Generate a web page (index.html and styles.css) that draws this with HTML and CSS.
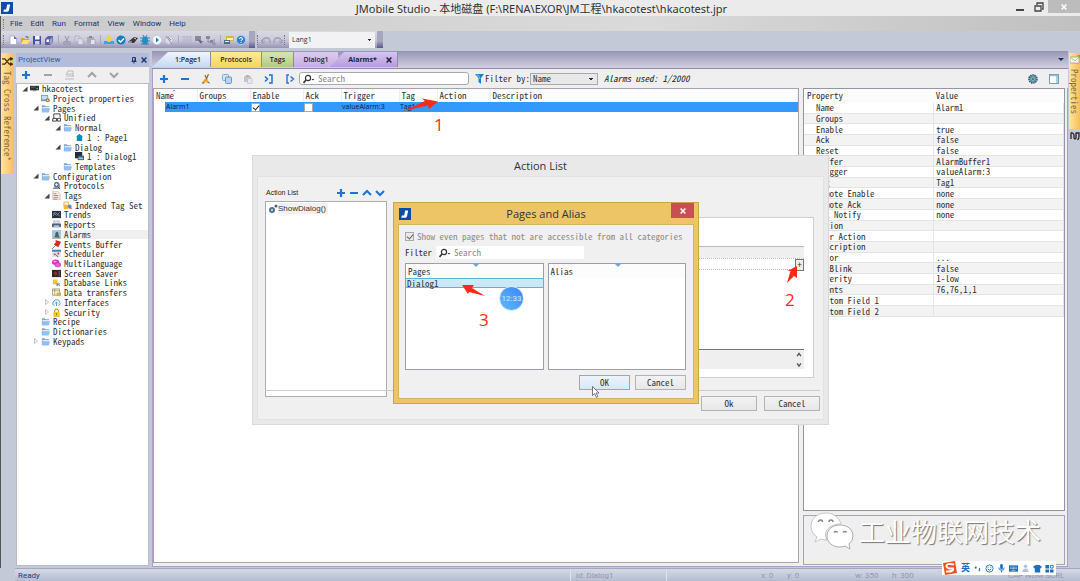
FILE: index.html
```html
<!DOCTYPE html>
<html lang="en">
<head>
<meta charset="utf-8">
<title>JMobile Studio</title>
<link rel="stylesheet" href="styles.css">
</head>
<body>
<svg class="defs" aria-hidden="true">
  <defs>
    <symbol id="logo" viewBox="0 0 12 12"><rect width="12" height="12" fill="#0b4da2"/><path d="M6.2 2.5h3L8 8.2Q7.600 9.800 6 9.800H2.300L2.900 7.600H5.100Z" fill="#fff"/></symbol>
    <symbol id="plus" viewBox="0 0 10 10"><path d="M5 1v8M1 5h8" stroke="#1b74d8" stroke-width="2.200" fill="none"/></symbol>
    <symbol id="minus" viewBox="0 0 10 10"><path d="M1 5h8" stroke="currentColor" stroke-width="2" fill="none"/></symbol>
    <symbol id="up" viewBox="0 0 10 10"><path d="M1 7l4-4 4 4" stroke="currentColor" stroke-width="2" fill="none"/></symbol>
    <symbol id="down" viewBox="0 0 10 10"><path d="M1 3l4 4 4-4" stroke="currentColor" stroke-width="2" fill="none"/></symbol>
    <symbol id="rename" viewBox="0 0 10 10"><path d="M3 1h5v6M2 4h6M1 6h8M0 9h9M3 1L1 5" stroke="#bbb" fill="none"/></symbol>
    <symbol id="new" viewBox="0 0 10 10"><path d="M2 1h4l2.500 2.500V9.500H2z" fill="#fff" stroke="#99a3c4" stroke-width=".7"/><path d="M6 1v3h3" fill="#5c6fa8"/></symbol>
    <symbol id="open" viewBox="0 0 10 10"><path d="M1 3h3l1 1h4v5H1z" fill="#d9a51e"/><path d="M3 5h7L8 9H1z" fill="#ffe076"/><path d="M5 2q2-2 3 0l1-.5-1 2-1.500-1" fill="#557a9c"/></symbol>
    <symbol id="save" viewBox="0 0 10 10"><path d="M1 1h8v8.500H1z" fill="#4750a0"/><path d="M3 1h4.500v3.500H3z" fill="#fff"/><path d="M3 6h4.500v3.500H3z" fill="#c9cdf0"/></symbol>
    <symbol id="saveall" viewBox="0 0 10 10"><path d="M1 4l3-3h5v6l-3 3H1z" fill="#5a61a8"/><path d="M2.500 4.500h2.500v2.500H2.500z" fill="#fff"/><path d="M6.300 4v5M7.800 2.500v5.500" stroke="#c6cae9" stroke-width=".8"/></symbol>
    <symbol id="cut" viewBox="0 0 10 10"><path d="M3 1l3 6M7 1L4 7" stroke="#9898a8" stroke-width="1"/><circle cx="3" cy="8" r="1.400" fill="none" stroke="#9898a8"/><circle cx="7" cy="8" r="1.400" fill="none" stroke="#9898a8"/></symbol>
    <symbol id="copyg" viewBox="0 0 10 10"><path d="M1 1h4l1 1v5H1z" fill="#d3d2e2" stroke="#a9a8ba" stroke-width=".7"/><path d="M4 3.500h3L9 5v4.500H4z" fill="#dddce9" stroke="#a9a8ba" stroke-width=".7"/></symbol>
    <symbol id="pasteg" viewBox="0 0 10 10"><path d="M1 2h7v6H1z" fill="#aaa9b9"/><path d="M3 1h3v2H3z" fill="#88889a"/><path d="M4.500 4.500H9v5H4.500z" fill="#e4e3ee" stroke="#9a99ac" stroke-width=".6"/></symbol>
    <symbol id="dl" viewBox="0 0 10 10"><path d="M0 6h10v3H0z" fill="#35a7d8"/><path d="M3.500 7V3.500h-2L5 0l3.500 3.500h-2V7z" fill="#f5d42f"/></symbol>
    <symbol id="check" viewBox="0 0 10 10"><circle cx="5" cy="5" r="4.600" fill="#1380bd"/><path d="M2.500 5l2 2 3.500-3.500" stroke="#fff" stroke-width="1.300" fill="none"/></symbol>
    <symbol id="plug" viewBox="0 0 10 10"><path d="M0 7l6-5 4 1-4 5H2z" fill="#38353a"/><path d="M1 7h3M6 3l2 1" stroke="#ddd"/></symbol>
    <symbol id="bug" viewBox="0 0 10 10"><path d="M0 3h10M0 6h10M1 9h8M3 0l1 2M7 0L6 2" stroke="#248bb2"/><ellipse cx="5" cy="5.500" rx="3" ry="4" fill="#218ebd"/></symbol>
    <symbol id="play" viewBox="0 0 10 10"><circle cx="5" cy="5" r="4.500" fill="#fff" stroke="#bfc1d0" stroke-width=".7"/><path d="M4 2.500L7 5 4 7.500z" fill="#1a7fc1"/></symbol>
    <symbol id="nop" viewBox="0 0 10 10"><circle cx="5" cy="5" r="4" fill="#dcdbe6" stroke="#c2c1cf"/><path d="M2 1l6 8M4 2l3 3" stroke="#908fa0"/></symbol>
    <symbol id="gridi" viewBox="0 0 10 10"><path d="M0 2h10M0 5h10M0 8h10M2 1v8M5 1v8M8 1v8" stroke="#b2b0c4" stroke-width=".8"/></symbol>
    <symbol id="snap" viewBox="0 0 10 10"><path d="M1 1h6v5H1z" fill="#8b899d"/><path d="M3 4l4 5 1-2h2z" fill="#6a687e"/></symbol>
    <symbol id="align" viewBox="0 0 10 10"><path d="M0 1h4v3H0zM4 5h3v3H4z" fill="#8a889b"/><path d="M2 4v3h2M8 4v5M6 9h4" stroke="#8a889b" fill="none"/></symbol>
    <symbol id="wnd" viewBox="0 0 10 10"><path d="M2 1h8v5H2z" fill="#d8b63e"/><path d="M3 3h6v2H3z" fill="#fff1b8"/><path d="M0 5h6v4H0z" fill="#576b83"/><path d="M1 6h4v1H1z" fill="#e6eef5"/></symbol>
    <symbol id="help" viewBox="0 0 10 10"><circle cx="5" cy="5" r="4.600" fill="#2f82cf" stroke="#a8cdf0"/><path d="M3.500 4q0-1.500 1.500-1.500t1.500 1.500Q6.500 5 5 5.500V6M5 7v1" stroke="#fff" fill="none"/></symbol>
    <symbol id="undo" viewBox="0 0 10 10"><path d="M1 8q0-5 5-5 3 0 3 5M0 5l2 3 2-2" stroke="#a19fb2" stroke-width="1.300" fill="none"/></symbol>
    <symbol id="scis" viewBox="0 0 10 10"><path d="M7.500 0L5 6M4 1l2 5" stroke="#8a6b3c" stroke-width="1.200"/><path d="M1 8.500l3-4 2 1 3 3.500H6L5 7.500 3.500 9.500z" fill="#f0a41c"/><path d="M1 9h2M7 8l1.500 1.500" stroke="#4c6b9c"/></symbol>
    <symbol id="copy" viewBox="0 0 10 10"><rect x=".5" y=".5" width="6" height="6" rx="1" fill="#d5e4f8" stroke="#7fa5da"/><rect x="3.500" y="3" width="6" height="6.500" rx="1" fill="#b9d3f5" stroke="#6b95d2"/></symbol>
    <symbol id="imp" viewBox="0 0 10 10"><path d="M1 2.500l2.500 2.500L1 7.500M5 1h3v8H5" stroke="#1b74d8" stroke-width="1.500" fill="none"/></symbol>
    <symbol id="exp" viewBox="0 0 10 10"><path d="M4 1H2v8h2M5.500 2.500l3 2.500-3 2.500" stroke="#1b74d8" stroke-width="1.400" fill="none"/></symbol>
    <symbol id="mag" viewBox="0 0 12 10"><circle cx="5" cy="4" r="2.600" fill="none" stroke="#333" stroke-width="1.200"/><path d="M3.200 5.800L.5 9" stroke="#333" stroke-width="1.600"/><path d="M8.500 5h3L10 6.500z" fill="#333"/></symbol>
    <symbol id="funnel" viewBox="0 0 10 10"><path d="M0 0h9L6 4v6L3.500 8V4z" fill="#1781c4"/><path d="M1.500 1h2l1.500 4" stroke="#77c6ef" fill="none"/></symbol>
    <symbol id="gear" viewBox="0 0 10 10"><circle cx="5" cy="5" r="4" fill="none" stroke="#36586c" stroke-width="1.600" stroke-dasharray="1.600 .6"/><circle cx="5" cy="5" r="3.200" fill="#8fd0e0" stroke="#36586c" stroke-width=".7"/><path d="M5 2v6M2 5h6M3 3l4 4M7 3L3 7" stroke="#36586c" stroke-width=".5"/></symbol>
    <symbol id="pane" viewBox="0 0 10 10"><rect x=".5" y=".5" width="9" height="9" fill="#fff" stroke="#7d9caf"/><path d="M1 1.500h8M8 1v8" stroke="#8fc0d2" stroke-width="1.500"/></symbol>
    <symbol id="folder" viewBox="0 0 10 10"><path d="M1 1.500h3l1 1h4V9H1z" fill="#7ba7d6"/><path d="M1.500 3.500h7.500V5H1.500z" fill="#eef5fc"/><path d="M2 5h8L8.500 9.500H1z" fill="#93bff0"/></symbol>
    <symbol id="host" viewBox="0 0 10 10"><path d="M0 2h10v5H0z" fill="#333"/><path d="M1 3h5v1H1z" fill="#6d6d6d"/><path d="M3 7h4v1H3z" fill="#777"/><circle cx="8" cy="5" r=".7" fill="#5f8"/></symbol>
    <symbol id="props" viewBox="0 0 10 10"><path d="M0 1h8v7H0z" fill="#7799c0"/><path d="M1 2h6v4H1z" fill="#c9dcf1"/><circle cx="7.500" cy="7" r="2.300" fill="#9b7a43"/><circle cx="7.500" cy="7" r=".8" fill="#fff"/></symbol>
    <symbol id="unified" viewBox="0 0 10 10"><path d="M2 6V1h7v4M1 6l-.5 3H5V6zM6 6h3.500v3H6z" stroke="#333" fill="none"/></symbol>
    <symbol id="home" viewBox="0 0 10 10"><path d="M5 1l4 3H8v5H2V4H1z" fill="#1787c0"/></symbol>
    <symbol id="dlg" viewBox="0 0 10 10"><path d="M0 0h8v7H0z" fill="#252a33"/><path d="M3 4h7v5H3z" fill="#3d5f7d"/><path d="M4 6h5v2H4z" fill="#8fc5e8"/></symbol>
    <symbol id="proto" viewBox="0 0 10 10"><path d="M3 1h4l2 3v5H5L2 6z" fill="#8e9db4"/><circle cx="5" cy="4" r="2" fill="#e6edf5" stroke="#38485c"/><path d="M6 6l3 3M1 8h4" stroke="#444"/></symbol>
    <symbol id="tags" viewBox="0 0 10 10"><path d="M1 0h5l3 3v7H1z" fill="#fbeceb" stroke="#a7918f" stroke-width=".6"/><path d="M2 3h3M2 5h5M2 7h5M2 9h4" stroke="#d1534d" stroke-width=".8"/></symbol>
    <symbol id="itag" viewBox="0 0 10 10"><path d="M1 1h5v6H1z" fill="#fff3d0" stroke="#c29b48" stroke-width=".7"/><path d="M1 5l2-1 3 1v4H1z" fill="#eeb43b"/><circle cx="7.500" cy="6" r="2" fill="#5f87bd"/><path d="M7 8l3 0" stroke="#d33"/></symbol>
    <symbol id="trend" viewBox="0 0 10 10"><path d="M0 1h10v8H0z" fill="#26323f"/><path d="M1 7l2-3 2 2 4-4M1 4l3-1 5 4" stroke="#a6bccc" stroke-width=".7" fill="none"/></symbol>
    <symbol id="print" viewBox="0 0 10 10"><path d="M2 1h6v3H2z" fill="#dfe7ef" stroke="#6d7d8d" stroke-width=".5"/><path d="M0 4h10v4H0z" fill="#536375"/><path d="M2 6h6v3H2z" fill="#b9cde2"/></symbol>
    <symbol id="alarm" viewBox="0 0 10 10"><path d="M0 0h10v10H0z" fill="#a8c8dc"/><path d="M2 8q2-1 2-5 2-2 3 0 0 4 2 6z" fill="#3c6475"/><path d="M1 9h8" stroke="#c8af54"/></symbol>
    <symbol id="pin" viewBox="0 0 10 10"><path d="M4 0l6 2-2 4-1 2-5-3 2-2z" fill="#e02727"/><path d="M4 6L0 10" stroke="#777"/></symbol>
    <symbol id="sched" viewBox="0 0 10 10"><path d="M0 0h10v9H0z" fill="#dfe5ee"/><path d="M0 1h10v2H0z" fill="#3f83bc"/><path d="M2 5h2v2H2zM6 4h2v2H6z" fill="#d94c39"/><path d="M4 6l3 3" stroke="#555"/></symbol>
    <symbol id="lang" viewBox="0 0 10 10"><ellipse cx="4" cy="3.500" rx="4" ry="3" fill="#e32bc1"/><ellipse cx="6.500" cy="6.500" rx="3.500" ry="2.500" fill="#f05ad6" stroke="#a21589" stroke-width=".5"/><path d="M2 3h3" stroke="#fff"/></symbol>
    <symbol id="saver" viewBox="0 0 10 10"><path d="M0 1h10v8H0z" fill="#2d2729"/><circle cx="4" cy="5" r="2" fill="#8f2b2b"/><path d="M8 2v6" stroke="#7a7374"/></symbol>
    <symbol id="db" viewBox="0 0 10 10"><path d="M1 1h5v6H1z" fill="#edc32e"/><ellipse cx="3.500" cy="1.500" rx="2.500" ry="1" fill="#fbe58a"/><path d="M5 6h4v3H5z" fill="#6a7fa7"/><path d="M6 9l3-2" stroke="#fff"/></symbol>
    <symbol id="data" viewBox="0 0 10 10"><path d="M.5 1h8v7h-8z" fill="#fff9dc" stroke="#8d835a" stroke-width=".8"/><path d="M1 3h7M3 1v7" stroke="#8d835a" stroke-width=".7"/><path d="M5 5h5v4H5z" fill="#d4b14c"/></symbol>
    <symbol id="cloud" viewBox="0 0 10 10"><path d="M3 8H2Q0 7 1 5q0-1 1-1 1-3 4-2 2 0 2.500 2.500Q10 6 8 8H7M5 9V5M3.500 6L5 4.500 6.500 6" stroke="#3b95cf" fill="none"/></symbol>
    <symbol id="lock" viewBox="0 0 10 10"><path d="M3 5V2.500q2-2.500 4 0V5" stroke="#c69a14" stroke-width="1.200" fill="none"/><path d="M1.500 4.500h7V10h-7z" fill="#f3c726"/><path d="M5 6v2" stroke="#8a6a09"/></symbol>
    <symbol id="exo" viewBox="0 0 8 8"><path d="M6.500 1.500v5h-5z" fill="#444"/></symbol>
    <symbol id="exc" viewBox="0 0 8 8"><path d="M2.500 1.500l3 2.500-3 2.500z" fill="#fff" stroke="#aaa" stroke-width=".7"/></symbol>
    <symbol id="xref" viewBox="0 0 12 10"><path d="M0 2h3l5 6h3M0 8h3l5-6h3M9 .5L11.500 2 9 3.500M9 6.500L11.500 8 9 9.500" stroke="#3a2a10" stroke-width="1.300" fill="none"/></symbol>
    <symbol id="note" viewBox="0 0 10 10"><path d="M0 2h9v6H0z" fill="#fffbe8" stroke="#9b9575" stroke-width=".7"/><path d="M1 3l4 3 4-4" stroke="#a9b6c3" fill="none"/><path d="M7 0h3v3z" fill="#73b33c"/></symbol>
    <symbol id="wave" viewBox="0 0 10 10"><path d="M1 8V3q0-2 1.500-1T4 4v3q1 2 2 0V2M5.500 2H9v3q0 3-1.500 4" stroke="#222" stroke-width="1.300" fill="none"/></symbol>
    <symbol id="cross" viewBox="0 0 10 10"><path d="M2 2l6 6M8 2L2 8" stroke="currentColor" stroke-width="1.800"/></symbol>
    <symbol id="sortd" viewBox="0 0 8 4"><path d="M1 0h6L4 3z" fill="#6aaed2"/></symbol>
  </defs>
</svg>

<header class="titlebar">
  <svg class="i12"><use href="#logo"/></svg>
  <h1>JMobile Studio - 本地磁盘 (F:\RENA\EXOR\JM工程\hkacotest\hkacotest.jpr</h1>
  <div class="winctl">
    <button type="button" aria-label="Minimize"><svg class="i10" viewBox="0 0 10 10"><path d="M1 8h8" stroke="#444" stroke-width="2"/></svg></button>
    <button type="button" aria-label="Restore"><svg class="i10" viewBox="0 0 10 10"><path d="M1 4h6v5H1zM3 3V1h6v6H8M1 4h6M3 1h6" stroke="#444" stroke-width="1.300" fill="none"/></svg></button>
    <button type="button" class="winclose" aria-label="Close"><svg class="i8"><use href="#cross"/></svg></button>
  </div>
</header>

<nav class="menubar">
  <span class="grip"></span>
  <button type="button">File</button><button type="button">Edit</button><button type="button">Run</button><button type="button">Format</button><button type="button">View</button><button type="button">Window</button><button type="button">Help</button>
</nav>

<div class="toolbars">
  <div class="strip">
    <span class="grip"></span>
    <button type="button" aria-label="New"><svg><use href="#new"/></svg></button><button type="button" aria-label="Open"><svg><use href="#open"/></svg></button><button type="button" aria-label="Save"><svg><use href="#save"/></svg></button><button type="button" aria-label="Save all"><svg><use href="#saveall"/></svg></button>
    <i class="sep"></i>
    <button type="button" aria-label="Cut"><svg><use href="#cut"/></svg></button><button type="button" aria-label="Copy"><svg><use href="#copyg"/></svg></button><button type="button" aria-label="Paste"><svg><use href="#pasteg"/></svg></button>
    <i class="sep"></i>
    <button type="button" aria-label="Download"><svg><use href="#dl"/></svg></button><button type="button" aria-label="Validate"><svg><use href="#check"/></svg></button><button type="button" aria-label="Connect"><svg><use href="#plug"/></svg></button><button type="button" aria-label="Debug"><svg><use href="#bug"/></svg></button><button type="button" aria-label="Simulate"><svg><use href="#play"/></svg></button><button type="button" aria-label="Stop"><svg><use href="#nop"/></svg></button>
    <i class="sep"></i>
    <button type="button" aria-label="Grid"><svg><use href="#gridi"/></svg></button><button type="button" aria-label="Snap"><svg><use href="#snap"/></svg></button><button type="button" aria-label="Align"><svg><use href="#align"/></svg></button>
    <i class="sep"></i>
    <button type="button" aria-label="Windows"><svg><use href="#wnd"/></svg></button><button type="button" aria-label="Help"><svg><use href="#help"/></svg></button>
    <span class="more"></span>
  </div>
  <div class="strip">
    <span class="grip"></span>
    <button type="button" aria-label="Undo"><svg><use href="#undo"/></svg></button><button type="button" aria-label="Redo"><svg class="flip"><use href="#undo"/></svg></button>
    <span class="grip"></span>
    <select class="lang" aria-label="Language"><option>Lang1</option></select>
    <span class="more"></span>
  </div>
</div>

<main class="work">
  <aside class="side">
    <button type="button" class="vtab left"><svg class="xref"><use href="#xref"/></svg><span>Tag Cross Reference*</span></button>
  </aside>

  <section class="project">
    <header class="phead"><h2>ProjectView</h2>
      <button type="button" aria-label="Pin"><svg class="i8" viewBox="0 0 8 8"><path d="M2.500 1.500h3v3.500h-3zM1.500 5.500h5M4 5v2.500M5 2v3" stroke="#1c3578" fill="none"/></svg></button>
      <button type="button" aria-label="Close"><svg class="i8"><use href="#cross"/></svg></button>
    </header>
    <div class="ptools">
      <button type="button" aria-label="Add"><svg class="i10"><use href="#plus"/></svg></button>
      <button type="button" aria-label="Remove"><svg class="i10"><use href="#minus"/></svg></button>
      <button type="button" aria-label="Rename"><svg class="i10"><use href="#rename"/></svg></button>
      <button type="button" aria-label="Move up"><svg class="i10"><use href="#up"/></svg></button>
      <button type="button" aria-label="Move down"><svg class="i10"><use href="#down"/></svg></button>
    </div>
    <div class="treebox">
      <ul class="tree">
        <li><svg class="ex"><use href="#exo"/></svg><svg class="ic"><use href="#host"/></svg>hkacotest</li>
        <li class="l1"><i class="ex"></i><svg class="ic"><use href="#props"/></svg>Project properties</li>
        <li class="l1"><svg class="ex"><use href="#exo"/></svg><svg class="ic"><use href="#folder"/></svg>Pages</li>
        <li class="l2"><svg class="ex"><use href="#exo"/></svg><svg class="ic"><use href="#unified"/></svg>Unified</li>
        <li class="l3"><svg class="ex"><use href="#exo"/></svg><svg class="ic"><use href="#folder"/></svg>Normal</li>
        <li class="l4"><i class="ex"></i><svg class="ic"><use href="#home"/></svg>1 : Page1</li>
        <li class="l3"><svg class="ex"><use href="#exo"/></svg><svg class="ic"><use href="#folder"/></svg>Dialog</li>
        <li class="l4"><i class="ex"></i><svg class="ic"><use href="#dlg"/></svg>1 : Dialog1</li>
        <li class="l3"><i class="ex"></i><svg class="ic"><use href="#folder"/></svg>Templates</li>
        <li class="l1"><svg class="ex"><use href="#exo"/></svg><svg class="ic"><use href="#folder"/></svg>Configuration</li>
        <li class="l2"><i class="ex"></i><svg class="ic"><use href="#proto"/></svg>Protocols</li>
        <li class="l2"><svg class="ex"><use href="#exo"/></svg><svg class="ic"><use href="#tags"/></svg>Tags</li>
        <li class="l3"><i class="ex"></i><svg class="ic"><use href="#itag"/></svg>Indexed Tag Set</li>
        <li class="l2"><i class="ex"></i><svg class="ic"><use href="#trend"/></svg>Trends</li>
        <li class="l2"><i class="ex"></i><svg class="ic"><use href="#print"/></svg>Reports</li>
        <li class="l2 on"><i class="ex"></i><svg class="ic"><use href="#alarm"/></svg><span>Alarms</span></li>
        <li class="l2"><i class="ex"></i><svg class="ic"><use href="#pin"/></svg>Events Buffer</li>
        <li class="l2"><i class="ex"></i><svg class="ic"><use href="#sched"/></svg>Scheduler</li>
        <li class="l2"><i class="ex"></i><svg class="ic"><use href="#lang"/></svg>MultiLanguage</li>
        <li class="l2"><i class="ex"></i><svg class="ic"><use href="#saver"/></svg>Screen Saver</li>
        <li class="l2"><i class="ex"></i><svg class="ic"><use href="#db"/></svg>Database Links</li>
        <li class="l2"><i class="ex"></i><svg class="ic"><use href="#data"/></svg>Data transfers</li>
        <li class="l2"><svg class="ex"><use href="#exc"/></svg><svg class="ic"><use href="#cloud"/></svg>Interfaces</li>
        <li class="l2"><svg class="ex"><use href="#exc"/></svg><svg class="ic"><use href="#lock"/></svg>Security</li>
        <li class="l1"><i class="ex"></i><svg class="ic"><use href="#folder"/></svg>Recipe</li>
        <li class="l1"><i class="ex"></i><svg class="ic"><use href="#folder"/></svg>Dictionaries</li>
        <li class="l1"><svg class="ex"><use href="#exc"/></svg><svg class="ic"><use href="#folder"/></svg>Keypads</li>
      </ul>
    </div>
  </section>

  <section class="editor">
    <nav class="tabs">
      <button type="button" class="tab page">1:Page1</button>
      <button type="button" class="tab proto">Protocols</button>
      <button type="button" class="tab tagst">Tags</button>
      <button type="button" class="tab dialogt">Dialog1</button>
      <button type="button" class="tab alarmst">Alarms* <svg class="i8"><use href="#cross"/></svg></button>
      <span class="drop"></span>
    </nav>
    <div class="etools">
      <button type="button" aria-label="Add"><svg class="i10"><use href="#plus"/></svg></button>
      <button type="button" aria-label="Remove" class="blue"><svg class="i10"><use href="#minus"/></svg></button>
      <button type="button" aria-label="Cut"><svg class="i10"><use href="#scis"/></svg></button>
      <button type="button" aria-label="Copy"><svg class="i10"><use href="#copy"/></svg></button>
      <button type="button" aria-label="Paste" class="faded"><svg class="i10"><use href="#pasteg"/></svg></button>
      <button type="button" aria-label="Import"><svg class="i10"><use href="#imp"/></svg></button>
      <button type="button" aria-label="Export"><svg class="i10"><use href="#exp"/></svg></button>
      <label class="search wide"><svg class="mag"><use href="#mag"/></svg><input type="text" placeholder="Search" aria-label="Search"></label>
      <svg class="i10 fun"><use href="#funnel"/></svg><label for="fby">Filter by:</label>
      <select id="fby"><option>Name</option></select>
      <em>Alarms used: 1/2000</em>
      <span class="right"><button type="button" aria-label="Settings"><svg class="i10"><use href="#gear"/></svg></button><button type="button" aria-label="Toggle pane"><svg class="i10"><use href="#pane"/></svg></button></span>
    </div>
    <div class="panes">
      <div class="gridbox">
        <table class="alarms">
          <colgroup><col class="c1"><col class="c2"><col class="c2"><col class="c3"><col class="c4"><col class="c3"><col class="c2"><col></colgroup>
          <thead><tr><th class="sorted">Name</th><th>Groups</th><th>Enable</th><th>Ack</th><th>Trigger</th><th>Tag</th><th>Action</th><th>Description</th></tr></thead>
          <tbody><tr><td class="first"><span>Alarm1</span></td><td></td><td><input type="checkbox" checked aria-label="Enable"></td><td><input type="checkbox" aria-label="Ack"></td><td>valueAlarm:3</td><td>Tag1</td><td></td><td></td></tr></tbody>
        </table>
      </div>
      <div class="rightcol">
        <div class="propbox">
          <table class="props">
            <thead><tr><th>Property</th><th>Value</th></tr></thead>
            <tbody>
              <tr><td>Name</td><td>Alarm1</td></tr>
              <tr><td>Groups</td><td></td></tr>
              <tr><td>Enable</td><td>true</td></tr>
              <tr><td>Ack</td><td>false</td></tr>
              <tr><td>Reset</td><td>false</td></tr>
              <tr><td>Buffer</td><td>AlarmBuffer1</td></tr>
              <tr><td>Trigger</td><td>valueAlarm:3</td></tr>
              <tr><td>Tag</td><td>Tag1</td></tr>
              <tr><td>Remote Enable</td><td>none</td></tr>
              <tr><td>Remote Ack</td><td>none</td></tr>
              <tr><td>Ack Notify</td><td>none</td></tr>
              <tr><td>Action</td><td></td></tr>
              <tr><td>User Action</td><td></td></tr>
              <tr><td>Description</td><td></td></tr>
              <tr><td>Color</td><td>...</td></tr>
              <tr><td>AckBlink</td><td>false</td></tr>
              <tr><td>Severity</td><td>1-low</td></tr>
              <tr><td>Events</td><td>76,76,1,1</td></tr>
              <tr><td>Custom Field 1</td><td></td></tr>
              <tr><td>Custom Field 2</td><td></td></tr>
            </tbody>
          </table>
        </div>
        <div class="infobox"></div>
      </div>
    </div>
  </section>

  <aside class="side rside">
    <button type="button" class="vtab rt"><svg class="i10"><use href="#note"/></svg><span>Properties</span></button>
    <svg class="i10 wave"><use href="#wave"/></svg>
  </aside>
</main>

<footer class="status">
  <span class="ready">Ready</span><span class="sid">id: Dialog1</span><span class="sgap"></span><span class="sx">x: 0</span><span class="sy">y: 0</span><span class="sw">w: 350</span><span class="sh">h: 300</span><span class="keys">CAP NUM SCRL</span>
</footer>

<section class="dialog" role="dialog" aria-labelledby="dt1">
  <h2 id="dt1">Action List</h2>
  <div class="dbody">
    <div class="dcols">
      <div class="dleft">
        <div class="dlhead"><span>Action List</span>
          <button type="button" aria-label="Add action"><svg class="i10"><use href="#plus"/></svg></button><button type="button" aria-label="Remove action"><svg class="i10"><use href="#minus"/></svg></button><button type="button" aria-label="Move up"><svg class="i10"><use href="#up"/></svg></button><button type="button" aria-label="Move down"><svg class="i10"><use href="#down"/></svg></button>
        </div>
        <ul class="actions"><li><svg class="i10" viewBox="0 0 10 10"><circle cx="4" cy="6" r="3" fill="#53728e"/><circle cx="4" cy="6" r="1" fill="#dfe8f0"/><circle cx="8" cy="2" r="1.500" fill="#3e5c7a"/></svg><span>ShowDialog()</span></li></ul>
      </div>
      <div class="dright">
        <div class="params"><div class="phdr"></div><div class="prow"><button type="button" aria-label="Browse">+</button></div></div>
        <div class="desc"><svg viewBox="0 0 10 20"><path d="M3 6.500l2-3 2 3M3 14l2 3 2-3" stroke="#555" stroke-width="1.400" fill="none"/></svg></div>
      </div>
    </div>
    <div class="dfoot"><button type="button" class="btn">Ok</button><button type="button" class="btn">Cancel</button></div>
  </div>
</section>

<section class="picker" role="dialog" aria-labelledby="dt2">
  <header><svg class="i12"><use href="#logo"/></svg><h2 id="dt2">Pages and Alias</h2><button type="button" class="redx" aria-label="Close"><svg class="i8"><use href="#cross"/></svg></button></header>
  <div class="pbody">
    <label class="showall"><input type="checkbox" checked disabled>Show even pages that not are accessible from all categories</label>
    <div class="frow"><label for="pf">Filter</label><span class="search"><svg class="mag"><use href="#mag"/></svg><input id="pf" type="text" placeholder="Search"></span></div>
    <div class="lists">
      <div class="lbox"><svg class="sort"><use href="#sortd"/></svg><div class="lh">Pages</div><div class="sel">Dialog1</div></div>
      <div class="lbox"><svg class="sort"><use href="#sortd"/></svg><div class="lh">Alias</div></div>
    </div>
    <div class="pfoot"><button type="button" class="btn hot">OK</button><button type="button" class="btn">Cancel</button></div>
  </div>
</section>

<div class="clock">12:33</div>
<svg class="marks" viewBox="0 0 1080 581" aria-hidden="true">
  <path d="M403 111l22-10-3-2.500 16 3-9 7.500-1-3.500z" fill="#ff2a17"/>
  <path d="M787 283l3.500-12-3 0 9.500-5v12l-3-2z" fill="#ff2a17"/>
  <path d="M485 296l-16-4-1 2-6-9 12 0-2 3z" fill="#ff2a17"/>
  <path d="M592.500 386.500v9l2-2 2 4 1.500-1-2-3.500h3z" fill="#fff" stroke="#555" stroke-width=".8"/>
</svg>
<span class="num n1">1</span><span class="num n2">2</span><span class="num n3">3</span>

<div class="brand">
  <svg viewBox="0 0 44 38"><path d="M16 1C7 1 1 7 1 14q0 7 6 11l-2 5 6-3q3 1 6 1C12 19 20 12 31 12 29 5 23 1 16 1z" fill="#fff" stroke="#bbb" stroke-width=".8"/><path d="M30 13C22 13 17 18 17 24s5 11 13 11q2 0 5-1l5 3-1-5q4-3 4-8c0-6-5-11-13-11z" fill="#fff" stroke="#999" stroke-width=".8"/><path d="M8.500 10a2 2 0 0 1 4 0M19 10a2 2 0 0 1 4 0M24 20.500a2 2 0 0 1 3.500 0M33 20.500a2 2 0 0 1 3.500 0" fill="none" stroke="#888" stroke-width="1.500"/></svg>
  <span>工业物联网技术</span>
</div>

<div class="ime">
  <svg class="sogou" viewBox="0 0 16 16"><path d="M1 3l12-2 2 12-12 2z" fill="#f0501e"/><path d="M12 4.500Q4.500 3 4.500 6t6.500 2.500Q12 12 4 11.500" stroke="#fff" stroke-width="2" fill="none"/></svg>
  <span>英</span>
  <svg viewBox="0 0 10 10"><circle cx="3" cy="4" r="1.200" fill="#1d6fc0"/><path d="M6.500 5q2 0 0 3" stroke="#1d6fc0" stroke-width="1.300" fill="none"/></svg>
  <svg viewBox="0 0 10 10"><circle cx="5" cy="5" r="4" fill="none" stroke="#1d6fc0"/><path d="M3 5.500q2 3 4 0M3.500 3v1M6.500 3v1" stroke="#1d6fc0" fill="none"/></svg>
  <svg viewBox="0 0 10 10"><rect x="3.500" y="0" width="3" height="6" rx="1.500" fill="#1d6fc0"/><path d="M2 4q0 3 3 3t3-3M5 7v2.500" stroke="#1d6fc0" fill="none"/></svg>
  <svg viewBox="0 0 10 10"><rect x="0" y="1.500" width="10" height="7" fill="#1d6fc0"/><path d="M1.500 3.500h7M1.500 5h7M3 7h4" stroke="#fff" stroke-width=".8" stroke-dasharray="1 .5"/></svg>
  <svg viewBox="0 0 10 10"><circle cx="5" cy="2.500" r="2" fill="#b4c3d8"/><path d="M1.500 9q0-4 3.500-4t3.500 4z" fill="#b4c3d8"/></svg>
  <svg viewBox="0 0 10 10"><path d="M3 1h4l3 2-1.500 2L8 4.500V9.500H2V4.500L1.500 5 0 3z" fill="#1d6fc0"/></svg>
  <svg viewBox="0 0 10 10"><path d="M.5 1h4v4h-4zM.5 6h4v3.500h-4zM5.500 6h4v3.500h-4z" fill="#1d6fc0"/><path d="M6 1.500h3v3H6z" fill="none" stroke="#1d6fc0"/></svg>
</div>
</body>
</html>
```
FILE: styles.css
```css
* { box-sizing: border-box; }
body {
  margin: 0; height: 100vh; display: flex; flex-direction: column; position: relative;
  overflow: hidden; background: #c3c9d7; color: #333;
  font: 9px/10px "Noto Sans Mono CJK SC", "Liberation Mono", monospace;
}
button, input, select { font: inherit; color: inherit; margin: 0; padding: 0; border: 0; background: none; }
button { display: flex; align-items: center; justify-content: center; }
h1, h2, ul { margin: 0; padding: 0; font-weight: 400; list-style: none; }
svg { display: block; flex: none; }
.defs { position: absolute; width: 0; height: 0; }
.i8 { width: 8px; height: 8px; }
.i10 { width: 10px; height: 10px; }
.i12 { width: 12px; height: 12px; }

.titlebar { height: 16px; display: flex; align-items: center; background: #ebebeb; padding-left: 1px; }
.titlebar h1 { flex: 1; text-align: center; font: 11px/15px "Noto Sans", "Noto Sans CJK SC", sans-serif; color: #333; padding-left: 60px; }
.winctl { display: flex; height: 13px; align-self: flex-start; }
.winctl button { width: 19px; }
.winctl .winclose { width: 32px; background: #bcbcbc; color: #fff; }

.menubar {
  height: 15px; display: flex; align-items: center; gap: 8px; padding-left: 2px; border-left: 1px solid #555;
  background: linear-gradient(90deg, #cacaca, #dadada 60%, #c0c0c0);
  font: 8px/12px Roboto, sans-serif; color: #25306e;
}
.grip { width: 4px; height: 10px; margin-right: 2px; border-left: 1px dotted #777; }
.menubar .grip { margin-right: -5px; }

.toolbars { height: 20px; display: flex; gap: 2px; border-left: 1px solid #555; }
.strip { display: flex; align-items: center; height: 17px; background: linear-gradient(#d9d9e4, #c9c8da 55%, #9693b3); }
.strip > .grip { margin: 0 1px 0 2px; width: 3px; }
.strip + .strip > .grip { margin: 0; }
.strip button { width: 12px; height: 14px; }
.strip button svg { width: 10px; height: 10px; }
.flip { transform: scaleX(-1); }
.sep { width: 1px; height: 10px; margin: 0 2px 0 3px; background: #aaa9bd; }
.more { width: 6px; height: 17px; margin-left: 2px; background: linear-gradient(#a8a6be 60%, #57578c); }
select {
  appearance: none; border-radius: 0;
  background-image: linear-gradient(45deg, transparent 50%, #234 50%), linear-gradient(-45deg, transparent 50%, #234 50%);
  background-size: 2px 2px; background-repeat: no-repeat; background-position: right 6px center, right 4px center;
  background-image: conic-gradient(from -45deg at 50% 100%, #234 90deg, transparent 0);
  background-size: 4px 2px; background-position: right 4px center;
}
.lang { width: 86px; height: 16px; margin-left: 2px; padding: 0 3px; background-color: #f2f2f4; font: 7px/14px "Open Sans", sans-serif; }

.work { flex: 1; min-height: 0; display: flex; border-left: 1px solid #555; }
.side { width: 15px; padding-top: 2px; }
.vtab { flex-direction: column; justify-content: flex-start; gap: 5px; width: 13px; padding-top: 4px; color: #7c6a42; background: linear-gradient(90deg, #ffe4a0, #f5bf58); }
.vtab span { writing-mode: vertical-rl; line-height: 11px; }
.vtab.left { height: 121px; }
.vtab.rt { height: 76px; width: 11px; padding-top: 2px; gap: 4px; }
.xref { width: 11px; height: 9px; }
.rside { width: 12px; padding-left: 1px; }
.wave { margin: 2px 0 0 1px; }

.project { width: 133px; margin: 2px 3px 2px 0; display: flex; flex-direction: column; }
.phead { height: 14px; display: flex; align-items: center; gap: 2px; padding: 0 1px 0 2px; background: #b5bcd9; color: #1c3578; }
.phead h2 { flex: 1; font: 8px/12px Roboto, sans-serif; color: #2c5da8; }
.ptools { height: 16px; display: flex; align-items: center; gap: 12px; padding-left: 5px; background: #efefef; color: #a2a2a2; }
.treebox { flex: 1; background: #fff; border: 1px solid #b9bcc6; }
.tree { height: 262px; display: grid; grid-auto-rows: 1fr; }
.tree li { display: flex; align-items: center; padding-left: 4px; line-height: 9px; white-space: pre; }
.tree .l1 { padding-left: 15px; }
.tree .l2 { padding-left: 26px; }
.tree .l3 { padding-left: 37px; }
.tree .l4 { padding-left: 49px; }
.ex { width: 8px; height: 8px; margin-right: 1px; }
.ic { width: 9px; height: 9px; margin-right: 3px; }
.tree .on { background: linear-gradient(90deg, #fff 35px, #f0f0f0 35px); }

.editor { flex: 1; min-width: 0; display: flex; flex-direction: column; }
.tabs { height: 18px; display: flex; align-items: flex-end; padding-bottom: 1px; background: linear-gradient(#9794b4, #d2d0e0); font: 7px/14px "Open Sans", sans-serif; border-bottom: 1px solid #8f8aa8; }
.tab { height: 15px; color: #25252f; border-right: 1px solid #8d8aa6; font-weight: 600; }
.page { width: 59px; padding-left: 14px; background: linear-gradient(#eef6ff, #c5d9f3); clip-path: polygon(16px 0, 100% 0, 100% 100%, 0 100%); }
.proto { width: 51px; background: linear-gradient(#ffea96, #f8d363); }
.tagst { width: 32px; background: linear-gradient(#d7e6b2, #b3ca82); }
.dialogt { width: 44px; border: 0; background: linear-gradient(#dccbf0, #c5aee2); }
.alarmst { width: 68px; margin-left: -8px; padding-left: 14px; gap: 8px; font-weight: 700; color: #1c1c3e; background: linear-gradient(#d7c4ef, #b69bda); clip-path: polygon(14px 0, 100% 0, 100% 100%, 0 100%); }
.drop { margin: 0 4px 6px auto; border: 3px solid transparent; border-top-color: #1c2a70; border-bottom: 0; }
.etools { height: 19px; display: flex; align-items: center; padding-left: 6px; background: #efefef; border-left: 1px solid #ad9ccb; }
.etools > button { margin-right: 11px; }
.etools > .blue, .dlhead { color: #1b74d8; }
.faded { opacity: .6; }
.search { display: flex; align-items: center; width: 148px; height: 13px; padding-left: 3px; gap: 3px; background: #fff; border-radius: 2px; }
.search input { flex: 1; min-width: 0; }
.search input::placeholder { color: #8a8a8a; }
.search.wide { width: 170px; border: 1px solid #aaa; border-radius: 3px; margin: 0 6px 0 -7px; }
.mag { width: 12px; height: 10px; }
#fby { width: 68px; height: 12px; margin: 0 6px 0 0; padding-left: 2px; background-color: #e8e8e8; border: 1px solid #aaa; }
.etools em { color: #222; }
.right { margin-left: auto; display: flex; gap: 11px; padding-right: 9px; }
.panes { flex: 1; min-height: 0; display: flex; gap: 4px; background: #efefef; border: 1px solid #ad9ccb; border-top: 0; padding: 0 2px 1px 0; margin-bottom: 1px; }
.gridbox { flex: 1; min-width: 0; margin-bottom: 2px; background: #fff; border: 1px solid #a5a5af; }
table { border-collapse: collapse; width: 100%; table-layout: fixed; }
th, td { text-align: left; font-weight: 400; padding: 0; white-space: nowrap; }
.c1 { width: 43px; } .c2 { width: 53px; } .c3 { width: 38px; } .c4 { width: 58px; }
.alarms th { height: 13px; padding-left: 2px; border-right: 1px solid #eee; background: #fcfcfc; }
.alarms .sorted { background: conic-gradient(from 135deg at 50% 0, #6aaed2 90deg, #fcfcfc 0) no-repeat 18px 0 / 4px 2px, #fcfcfc; }
.alarms td { height: 10px; background: #3399fc; font: 7px/8px "Open Sans", sans-serif; color: #0b1c48; padding-left: 1px; }
.alarms .first { background: linear-gradient(90deg, #fff 11px, #3399fc 11px); padding-left: 12px; }
input[type=checkbox] { appearance: none; display: block; width: 9px; height: 9px; background: #fff; border: 1px solid #aaa; }
input[type=checkbox]:checked { position: relative; }
input[type=checkbox]:checked::after { content: ""; position: absolute; left: 2px; top: 0; width: 3px; height: 5px; border: solid #222; border-width: 0 1px 1px 0; transform: rotate(40deg); }
input[type=checkbox]:disabled { background: #e9e9e9; }
input[type=checkbox]:disabled::after { border-color: #666; }

.rightcol { width: 262px; display: flex; flex-direction: column; gap: 4px; }
.propbox { flex: 1; background: #fff; border: 1px solid #9696a2; }
.infobox { height: 50px; border: 1px solid #a5a5af; }
.props { height: 228px; }
.props th { height: 14px; padding-left: 3px; background: #fcfcfc; }
.props td { padding-left: 12px; line-height: 9px; border-bottom: 1px solid #e4e4e4; border-right: 1px solid #e4e4e4; }
.props td + td, .props th + th { padding-left: 2px; }
.props tbody tr:nth-child(even) { background: #f3f3f3; }

.status { height: 13px; display: flex; align-items: center; margin-left: 15px; background: linear-gradient(#d4d9e6, #b4bdd1); border-top: 1px solid #a3a9bc; font: 8px/11px Roboto, sans-serif; color: #9b93ae; white-space: nowrap; }
.ready { flex: 1; padding-left: 3px; color: #29397d; }
.sid { width: 97px; padding-left: 5px; border-left: 1px solid #dde1ea; border-right: 1px solid #dde1ea; }
.sgap { width: 94px; border-right: 1px solid #dde1ea; }
.sx { width: 26px; } .sy { width: 68px; } .sw { width: 37px; } .sh { width: 116px; } .keys { width: 72px; }

.dialog { position: absolute; left: 252px; top: 155px; width: 577px; height: 270px; padding: 0 4px 4px; background: #e9e9e9; border: 1px solid #d9d9d9; display: flex; flex-direction: column; }
.dialog h2, .picker h2 { text-align: center; font: 11px/20px "Open Sans", sans-serif; color: #333; }
.dbody { flex: 1; display: flex; flex-direction: column; background: #f0f0f0; border: 1px solid #e2e2e2; padding: 7px 3px 8px 7px; }
.dcols { flex: 1; display: flex; gap: 13px; }
.dleft { width: 122px; display: flex; flex-direction: column; }
.dlhead { height: 17px; display: flex; align-items: center; gap: 3px; padding: 0 2px 0 1px; }
.dlhead span { flex: 1; font: 7px/10px "Liberation Sans", sans-serif; color: #222; }
.actions { flex: 1; background: #fff; border: 1px solid #abadb3; padding: 1px 2px; }
.actions li { display: flex; align-items: center; font: 8px/11px "Liberation Sans", sans-serif; }
.actions span { background: #f1f1f1; padding-right: 2px; }
.dright { flex: 1; display: flex; flex-direction: column; margin: 33px 6px 19px 0; padding: 28px 9px 8px; background: #fff; border: 1px solid #cfcfcf; }
.params { flex: 1; border-top: 1px solid #bbb; border-bottom: 1px solid #777; }
.phdr { height: 11px; background: #efefef; }
.prow { height: 12px; display: flex; justify-content: flex-end; border: 1px dotted #bbb; border-width: 1px 0; }
.prow button { width: 9px; height: 12px; border: 1px solid #777; background: #eee; }
.desc { height: 19px; display: flex; justify-content: flex-end; background: #efefef; }
.desc svg { width: 10px; height: 19px; }
.dfoot { position: relative; margin-top: -7px; border-top: 1px solid #ccc; padding-top: 5px; display: flex; justify-content: flex-end; gap: 7px; }
.btn { width: 56px; height: 15px; border: 1px solid #b3b3b3; background: linear-gradient(#f3f3f3, #e7e7e7); }
.btn.hot { border-color: #7eb0dc; background: linear-gradient(#edf4fc, #d8e8f8); }

.picker { position: absolute; left: 393px; top: 202px; width: 306px; height: 202px; padding: 0 4px 4px; background: #edc566; border: 1px solid #c9a54c; display: flex; flex-direction: column; }
.picker header { display: flex; align-items: center; height: 21px; padding-left: 1px; }
.picker h2 { flex: 1; padding-left: 10px; }
.redx { width: 23px; height: 15px; align-self: flex-start; background: #c75050; color: #fff; }
.pbody { flex: 1; display: flex; flex-direction: column; padding: 6px 7px 8px 6px; background: #f0f0f0; border: 1px solid #d1b468; }
.showall { display: flex; align-items: center; gap: 3px; height: 11px; color: #8b8b8b; white-space: nowrap; }
.frow { display: flex; align-items: center; gap: 4px; margin: 4px 0; }
.lists { flex: 1; display: flex; gap: 4px; }
.lbox { flex: 1; position: relative; background: #fff; border: 1px solid #9c9ea6; }
.sort { position: absolute; left: 48%; top: 0; width: 8px; height: 4px; }
.lh { height: 14px; padding: 3px 2px 0; background: #fcfcfc; }
.sel { height: 10px; line-height: 9px; padding-left: 1px; background: #cbe8f6; border: solid #5bb3d8; border-width: 1px 0; }
.pfoot { display: flex; justify-content: flex-end; gap: 5px; margin-top: 5px; }
.pfoot .btn { width: 51px; }

.clock { position: absolute; left: 499px; top: 286px; width: 25px; height: 25px; border-radius: 50%; border: 1px solid #dcebf8; background: linear-gradient(45deg, #5cbcff, #3b86f5); color: #d8ecff; font: 8px/23px Roboto, sans-serif; text-align: center; }
.marks { position: absolute; left: 0; top: 0; width: 1080px; height: 581px; pointer-events: none; }
.num { position: absolute; font: 17px/16px "Open Sans", sans-serif; color: #ff2a17; }
.n1 { left: 434px; top: 117px; }
.n2 { left: 785px; top: 292px; }
.n3 { left: 479px; top: 312px; }
.brand { position: absolute; left: 810px; top: 512px; display: flex; align-items: center; gap: 5px; color: #fff; font: 400 26px/38px "Noto Sans CJK SC", sans-serif; text-shadow: 1px 1px 1px #777; white-space: nowrap; }
.brand svg { width: 44px; height: 38px; }
.ime { position: absolute; left: 942px; top: 561px; height: 14px; display: flex; align-items: center; gap: 3px; padding-right: 2px; background: #fff; color: #1d6fc0; font: 700 9px/12px "Noto Sans CJK SC", sans-serif; }
.ime svg { width: 9px; height: 9px; }
.ime .sogou { width: 16px; height: 16px; }
```
